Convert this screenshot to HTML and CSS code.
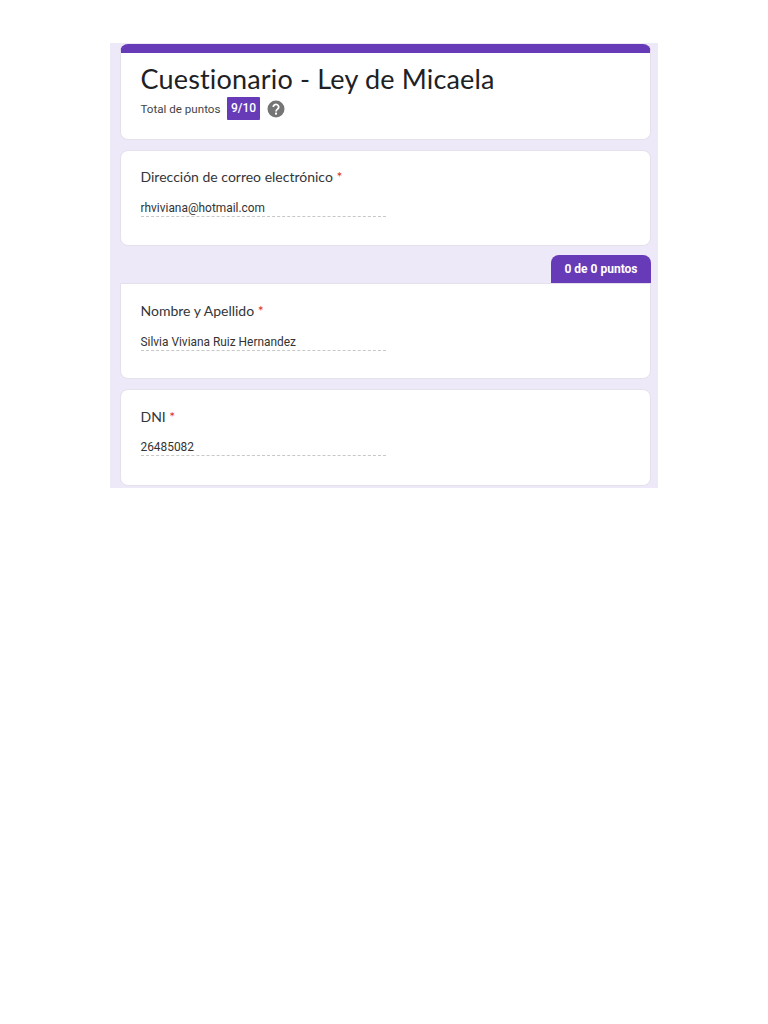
FILE: index.html
```html
<!DOCTYPE html>
<html lang="en">
<head>
    <meta charset="UTF-8">
    <meta name="viewport" content="width=device-width, initial-scale=1.0">
    <title>Cuestionario - Ley de Micaela</title>
    <link rel="stylesheet" href="styles.css">
</head>
<body>
    <div class="form">
        <div class="card header">
            <h1 class="title">Cuestionario - Ley de Micaela</h1>
            <div class="score">
                <span class="score-label">Total de puntos</span>
                <span class="score-badge">9/10</span>
                <svg class="help" viewBox="0 0 18 18" width="18" height="18">
                    <circle cx="9" cy="9" r="8.5" fill="#757575"/>
                    <path d="M6.3 7a2.7 2.6 0 1 1 4.3 2.1c-1 .7-1.6 1.1-1.6 2.3" fill="none" stroke="#fff" stroke-width="1.8"/>
                    <rect x="8" y="12.6" width="2" height="2" fill="#fff"/>
                </svg>
            </div>
        </div>

        <div class="card question first">
            <div class="label">Dirección de correo electrónico <span class="req">*</span></div>
            <div class="answer">rhviviana@hotmail.com</div>
        </div>

        <div class="section-tab-row">
            <div class="section-tab">0 de 0 puntos</div>
        </div>

        <div class="card question after-tab">
            <div class="label">Nombre y Apellido <span class="req">*</span></div>
            <div class="answer">Silvia Viviana Ruiz Hernandez</div>
        </div>

        <div class="card question last">
            <div class="label">DNI <span class="req">*</span></div>
            <div class="answer">26485082</div>
        </div>
    </div>
</body>
</html>
```

FILE: styles.css
```css
body {
    margin: 0;
    background-color: #fff;
    font-family: Roboto, Arial, sans-serif;
}
.form {
    width: 548px;
    height: 445px;
    margin: 43px 0 0 110px;
    padding: 1px 7px 0 10px;
    box-sizing: border-box;
    background-color: #ede9f8;
}
.card {
    background-color: #fff;
    border: 1px solid #e4e1ec;
    border-radius: 8px;
    box-sizing: border-box;
    padding: 0 19.5px;
}
.header {
    height: 96px;
    border-top: 9px solid #673ab7;
    margin-bottom: 10px;
}
.title {
    margin: 8px 0 0;
    font-family: Lato, "Open Sans", sans-serif;
    font-size: 27px;
    line-height: 36px;
    font-weight: 400;
    letter-spacing: 0.17px;
    font-variant-ligatures: none;
    color: #202124;
}
.score {
    display: flex;
    align-items: center;
}
.score-label {
    font-size: 11.6px;
    color: #444;
    margin-right: 7px;
}
.score-badge {
    background-color: #673ab7;
    color: #fff;
    font-size: 12px;
    font-weight: 500;
    padding: 0 3.5px;
    height: 23px;
    line-height: 23px;
    border-radius: 1px;
    margin-right: 7.5px;
}
.question {
    height: 96px;
    padding-top: 17px;
}
.after-tab {
    padding-top: 18px;
    border-radius: 0 0 8px 8px;
    margin-bottom: 10px;
}
.last {
    height: 97px;
    padding-top: 18px;
}
.label {
    font-family: Lato, "Open Sans", sans-serif;
    font-size: 14px;
    line-height: 18px;
    color: #33363a;
}
.req {
    color: #d93025;
}
.answer {
    width: 245px;
    margin-top: 15px;
    font-size: 11.9px;
    line-height: 15px;
    color: #333;
    border-bottom: 1px dashed #c8c8c8;
}
.last .answer {
    margin-top: 14px;
}
.section-tab-row {
    display: flex;
    justify-content: flex-end;
    margin-top: 9px;
}
.section-tab {
    width: 100px;
    height: 28px;
    line-height: 28px;
    text-align: center;
    background-color: #673ab7;
    color: #fff;
    font-size: 12px;
    font-weight: 700;
    border-radius: 8px 8px 0 0;
}
```
